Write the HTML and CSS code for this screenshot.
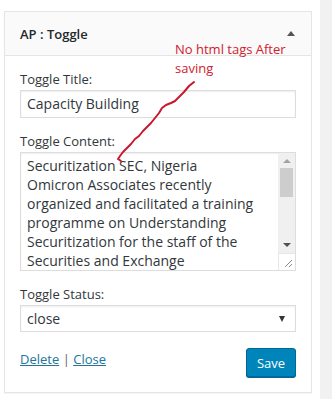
FILE: index.html
```html
<!DOCTYPE html>
<html>
<head>
<meta charset="utf-8">
<link rel="stylesheet" href="styles.css">
</head>
<body>
<div class="page">
  <div class="column">
    <div class="widget">
      <div class="widget-top">
        <h3 class="widget-title">AP : Toggle</h3>
        <span class="toggle-arrow"></span>
      </div>
      <div class="widget-inside">
        <div class="field">
          <label class="label">Toggle Title:</label>
          <div class="input">Capacity Building</div>
        </div>
        <div class="field">
          <label class="label">Toggle Content:</label>
          <div class="textarea">
            <div class="textarea-text">Securitization SEC, Nigeria<br>Omicron Associates recently organized and facilitated a training programme on Understanding Securitization for the staff of the Securities and Exchange</div>
            <div class="scrollbar">
              <span class="sb-up"></span>
              <span class="sb-thumb"></span>
              <span class="sb-down"></span>
            </div>
            <div class="resizer">
              <svg width="16" height="16" viewBox="0 0 16 16"><path d="M13 6 L6 13 M13 10 L10 13" stroke="#8a8a8a" stroke-width="1"/></svg>
            </div>
          </div>
        </div>
        <div class="field">
          <label class="label">Toggle Status:</label>
          <div class="select">close<span class="select-arrow"></span></div>
        </div>
        <div class="actions">
          <div class="links"><a class="link">Delete</a> <span class="sep">|</span> <a class="link">Close</a></div>
          <button class="save">Save</button>
        </div>
      </div>
      <div class="note">No html tags After<br>saving</div>
      <svg class="scribble" width="332" height="399" viewBox="0 0 332 399">
        <polyline points="194,82 189,86 184,92 179,97 175,101 171,103 166,105 162,108 159,113 155,118 151,123 147,127 143,131 139,136 135,139 131,144 127,148 123,152 120,156 118,159 121,161" fill="none" stroke="#c9172e" stroke-width="2" stroke-linejoin="round" stroke-linecap="round"/>
      </svg>
    </div>
  </div>
  <div class="side"></div>
</div>
</body>
</html>
```
FILE: styles.css
```css
* { box-sizing: border-box; }
html, body { margin: 0; padding: 0; }
body {
  font-family: "Open Sans", "Liberation Sans", sans-serif;
  color: #32373c;
  background: #fff;
  width: 332px;
  height: 399px;
  overflow: hidden;
}
.page { display: flex; height: 399px; }
.column { width: 320px; padding: 11px 8px 0 4px; background: #fff; }
.side { flex: 1; background: #f1f1f1; }
.widget {
  position: relative;
  border: 1px solid #e5e5e5;
  box-shadow: 0 1px 1px rgba(0,0,0,0.04);
  background: #fff;
}
.widget-top {
  height: 44px;
  background: #fafafa;
  border-bottom: 1px solid #e5e5e5;
  display: flex;
  align-items: center;
  justify-content: space-between;
  padding: 0 16px 0 15px;
}
.widget-title {
  margin: 0;
  font-size: 13px;
  font-weight: 600;
  color: #23282d;
}
.toggle-arrow {
  width: 0; height: 0;
  border-left: 4px solid transparent;
  border-right: 4px solid transparent;
  border-bottom: 5px solid #555;
}
.widget-inside { padding: 14px 15px 15px 15px; }
.field { margin-bottom: 14px; }
.label { display: block; font-size: 13px; line-height: 18px; margin-bottom: 2px; }
.input, .select, .textarea {
  border: 1px solid #ddd;
  box-shadow: inset 0 1px 2px rgba(0,0,0,0.07);
  background: #fff;
  font-size: 14px;
  color: #32373c;
}
.input { height: 28px; line-height: 26px; padding: 0 6px; }
.textarea { height: 119px; display: flex; position: relative; overflow: hidden; }
.textarea-text { flex: 1; padding: 3px 6px; line-height: 19px; }
.scrollbar {
  width: 17px;
  background: #f0f0f0;
  display: flex;
  flex-direction: column;
  align-items: center;
  height: 101px;
}
.sb-up {
  margin-top: 6px;
  width: 0; height: 0;
  border-left: 4px solid transparent;
  border-right: 4px solid transparent;
  border-bottom: 4px solid #a3a3a3;
}
.sb-thumb { width: 13px; height: 29px; background: #cdcdcd; margin-top: 5px; }
.sb-down {
  margin-top: auto;
  margin-bottom: 7px;
  width: 0; height: 0;
  border-left: 4px solid transparent;
  border-right: 4px solid transparent;
  border-top: 4px solid #505050;
}
.resizer {
  position: absolute;
  right: 0; bottom: 0;
  width: 17px; height: 17px;
  background: #fff;
  border-top: 1px solid #e6e6e6;
  border-left: 1px solid #e6e6e6;
}
.resizer svg { display: block; }
.select {
  height: 27px; line-height: 25px; padding: 0 6px;
  display: flex; justify-content: space-between; align-items: center;
}
.select-arrow {
  width: 0; height: 0;
  border-left: 3.5px solid transparent;
  border-right: 3.5px solid transparent;
  border-top: 6px solid #333;
  margin-right: 4px;
}
.actions { display: flex; justify-content: space-between; align-items: flex-start; }
.links { font-size: 13px; line-height: 18px; padding-top: 4px; }
.link { color: #21759b; text-decoration: underline; }
.sep { color: #666; }
.save {
  margin-top: 2px;
  width: 50px; height: 29px;
  background: #0085ba;
  border: 1px solid #006799;
  border-radius: 3px;
  box-shadow: 0 1px 0 #006799;
  color: #fff;
  font-family: "Open Sans", "Liberation Sans", sans-serif;
  font-size: 13px;
  padding: 0;
}
.note {
  position: absolute;
  left: 170px; top: 28px;
  color: #d0202e;
  font-size: 13px;
  line-height: 19px;
}
.scribble { position: absolute; left: -5px; top: -12px; pointer-events: none; }
```
